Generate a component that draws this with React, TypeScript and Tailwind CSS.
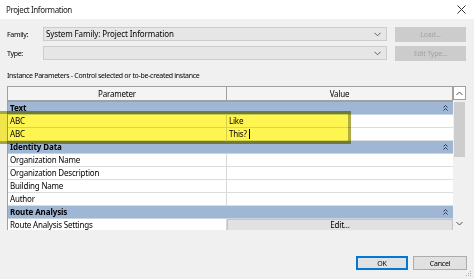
const rows: { label: string; value?: string; group?: boolean; cursor?: boolean; edit?: boolean }[] = [
  { label: "Text", group: true },
  { label: "ABC", value: "Like" },
  { label: "ABC", value: "This?", cursor: true },
  { label: "Identity Data", group: true },
  { label: "Organization Name" },
  { label: "Organization Description" },
  { label: "Building Name" },
  { label: "Author" },
  { label: "Route Analysis", group: true },
  { label: "Route Analysis Settings", edit: true },
];

function Chevron() {
  return (
    <svg width="7" height="5" viewBox="0 0 7 5" className="absolute right-[5px] top-[4px]">
      <path d="M0.5 0.8 L3.5 3.8 L6.5 0.8" fill="none" stroke="#606060" strokeWidth="1" />
    </svg>
  );
}

function Collapse() {
  return (
    <svg width="5" height="6" viewBox="0 0 5 6" className="absolute right-[5px] top-[3px]">
      <path d="M0.5 2.5 L2.5 0.5 L4.5 2.5 M0.5 5.5 L2.5 3.5 L4.5 5.5" fill="none" stroke="#303a4a" strokeWidth="1" />
    </svg>
  );
}

export default function App() {
  return (
    <div className="relative w-[474px] h-[279px] overflow-hidden bg-[#f0f0f0] text-[8px] tracking-[-0.2px] text-black font-['Noto_Sans','Liberation_Sans',sans-serif]">
      {/* Title bar */}
      <div className="h-[19px] bg-white flex items-center justify-between pl-[6px] pr-[8px]">
        <span className="text-[8px] tracking-[-0.4px] text-[#1a1a1a] leading-none mt-[1px]">Project Information</span>
        <svg width="9" height="9" viewBox="0 0 9 9">
          <path d="M0.5 0.5 L8.5 8.5 M8.5 0.5 L0.5 8.5" stroke="#333" strokeWidth="1" />
        </svg>
      </div>

      <div className="px-[7px]">
        {/* Family */}
        <div className="flex items-center mt-[8px] h-[14px]">
          <span className="w-[36px] leading-none text-[7px] tracking-[-0.3px]">Family:</span>
          <div className="relative w-[344px] h-[14px] bg-[#e6e6e6] border border-[#cccccc] flex items-center pl-[2px]">
            <span className="leading-none tracking-[-0.1px]">System Family: Project Information</span>
            <Chevron />
          </div>
          <div className="ml-[8px] w-[71px] h-[15px] bg-[#cccccc] flex items-center justify-center text-[#a3a3a3] leading-none text-[7px]">Load...</div>
        </div>
        {/* Type */}
        <div className="flex items-center mt-[5px] h-[14px]">
          <span className="w-[36px] leading-none text-[7px] tracking-[-0.3px]">Type:</span>
          <div className="relative w-[344px] h-[14px] bg-[#e6e6e6] border border-[#cccccc]">
            <Chevron />
          </div>
          <div className="ml-[8px] w-[71px] h-[15px] bg-[#cccccc] flex items-center justify-center text-[#a3a3a3] leading-none text-[7px]">Edit Type...</div>
        </div>

        <div className="mt-[12px] leading-none text-[7px] tracking-[-0.3px]">Instance Parameters - Control selected or to-be-created instance</div>

        {/* Table */}
        <div className="mt-[7px] flex w-[459px] h-[144px]">
          <div className="w-[446px] h-full overflow-hidden border-l border-[#a0a0a0] bg-white">
            <div className="flex h-[16px] bg-[#f4f4f4] border-t border-b-2 border-[#a0a0a0]">
              <div className="w-[219px] flex items-center justify-center border-r border-[#a0a0a0] leading-none">Parameter</div>
              <div className="flex-1 flex items-center justify-center border-r border-[#a0a0a0] leading-none">Value</div>
            </div>
            {rows.map((r, i) =>
              r.group ? (
                <div key={i} className="relative h-[13px] bg-[#9fb6d4] flex items-center pl-[2px] font-bold leading-none border-b border-[#c9d4e2] tracking-[-0.1px]">
                  {r.label}
                  <Collapse />
                </div>
              ) : (
                <div key={i} className="flex h-[13px] border-b border-[#dcdcdc]">
                  <div className="w-[219px] flex items-center pl-[2px] border-r border-[#d8d8d8] leading-none">{r.label}</div>
                  {r.edit ? (
                    <div className="flex-1 bg-[#e1e1e1] border border-[#c4c4c4] flex items-center justify-center leading-none">Edit...</div>
                  ) : (
                    <div className="flex-1 flex items-center pl-[2px] leading-none">
                      {r.value}
                      {r.cursor && <span className="ml-[2px] w-px h-[10px] bg-black" />}
                    </div>
                  )}
                </div>
              )
            )}
          </div>
          {/* Scrollbar */}
          <div className="w-[13px] h-full bg-[#f0f0f0] flex flex-col items-center">
            <div className="h-[14px] w-full border border-[#a0a0a0] bg-white flex items-center justify-center">
              <svg width="7" height="5" viewBox="0 0 7 5">
                <path d="M0.5 4 L3.5 1 L6.5 4" fill="none" stroke="#505050" strokeWidth="1" />
              </svg>
            </div>
            <div className="mt-[2px] w-[11px] h-[55px] bg-[#cdcdcd]" />
            <div className="flex-1" />
            <div className="h-[13px] w-full flex items-center justify-center">
              <svg width="7" height="5" viewBox="0 0 7 5">
                <path d="M0.5 1 L3.5 4 L6.5 1" fill="none" stroke="#505050" strokeWidth="1" />
              </svg>
            </div>
          </div>
        </div>

        {/* Buttons */}
        <div className="flex justify-end gap-[5px] mt-[26px] text-[7px]">
          <div className="w-[52px] h-[14px] bg-[#e1e1e1] border-2 border-[#0078d7] flex items-center justify-center leading-none">OK</div>
          <div className="w-[54px] h-[14px] bg-[#e1e1e1] border border-[#adadad] flex items-center justify-center leading-none">Cancel</div>
        </div>
      </div>

      {/* Yellow highlight annotation */}
      <div className="absolute left-[-3px] top-[111px] w-[354px] h-[33px] border-[3px] border-[#aeae48] bg-[#fff550] mix-blend-multiply" />

      {/* Resize grip */}
      <svg width="6" height="6" viewBox="0 0 6 6" className="absolute right-[2px] bottom-[2px]">
        <rect x="4" y="0" width="1" height="1" fill="#b0b0b0" />
        <rect x="2" y="2" width="1" height="1" fill="#b0b0b0" />
        <rect x="4" y="2" width="1" height="1" fill="#b0b0b0" />
        <rect x="0" y="4" width="1" height="1" fill="#b0b0b0" />
        <rect x="2" y="4" width="1" height="1" fill="#b0b0b0" />
        <rect x="4" y="4" width="1" height="1" fill="#b0b0b0" />
      </svg>
    </div>
  );
}
